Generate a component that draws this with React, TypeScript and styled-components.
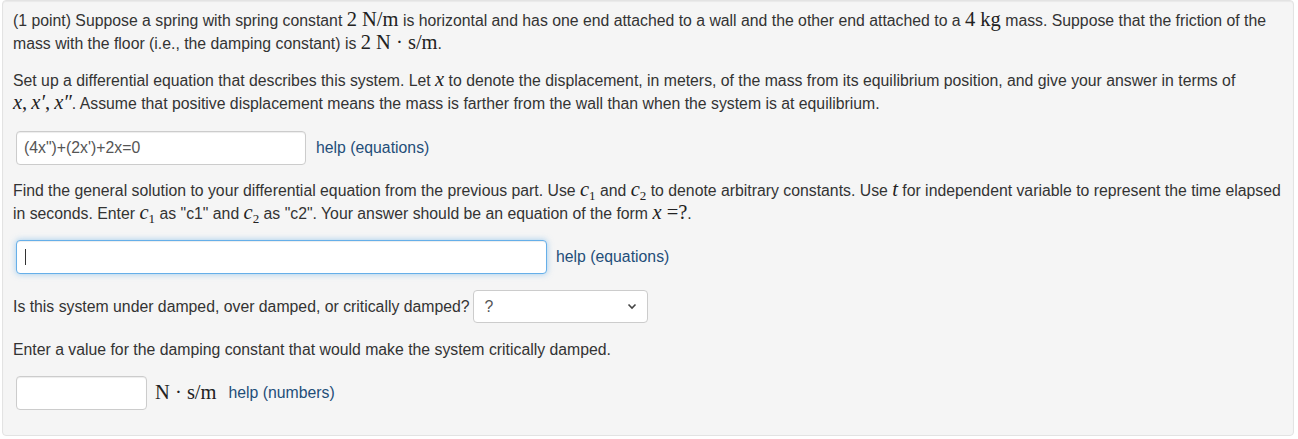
import React from "react";
import styled, { createGlobalStyle } from "styled-components";

const Global = createGlobalStyle`
  html, body { margin: 0; padding: 0; background: #ffffff; }
  body { font-family: "Liberation Sans", Arial, sans-serif; font-size: 15.8px; color: #333; }
`;

const Well = styled.div`
  margin: 0 4px 0 2px;
  min-height: 416px;
  padding: 9px 10px 9px 10px;
  background: #f5f5f5;
  border: 1px solid #e3e3e3;
  border-radius: 4px;
  box-shadow: inset 0 1px 1px rgba(0, 0, 0, 0.05);
`;

const P = styled.p<{ $mt?: number }>`
  margin: ${(p) => p.$mt ?? 0}px 0 0 0;
  line-height: 22.5px;
`;

const M = styled.span`
  font-family: "Liberation Serif", "DejaVu Serif", serif;
  font-size: 20.5px;
  line-height: 0;
  white-space: nowrap;
  color: #222;
`;

const MI = styled.i`
  font-family: "Liberation Serif", "DejaVu Serif", serif;
  font-size: 20.5px;
  font-style: italic;
  line-height: 0;
  color: #222;
`;

const Sub = styled.sub`
  font-size: 13px;
  vertical-align: -4px;
  font-style: normal;
  line-height: 0;
`;

const Row = styled.div<{ $mt: number }>`
  display: flex;
  align-items: center;
  margin-top: ${(p) => p.$mt}px;
`;

const FieldWrap = styled.div`
  position: relative;
  display: flex;
  margin-left: 3px;
`;

const Field = styled.input<{ $w: number; $focus?: boolean }>`
  box-sizing: border-box;
  width: ${(p) => p.$w}px;
  height: 34px;
  padding: 0 7px;
  font-family: "Liberation Sans", Arial, sans-serif;
  font-size: 15.8px;
  color: #555;
  background: #fff;
  border: 1px solid ${(p) => (p.$focus ? "#66afe9" : "#ccc")};
  border-radius: 4px;
  box-shadow: ${(p) =>
    p.$focus
      ? "inset 0 1px 1px rgba(0,0,0,.075), 0 0 6px rgba(102,175,233,.6)"
      : "inset 0 1px 1px rgba(0,0,0,.075)"};
  outline: none;
`;

const Caret = styled.span`
  position: absolute;
  left: 9px;
  top: 9px;
  width: 1px;
  height: 16px;
  background: #333;
`;

const Help = styled.a<{ $ml?: number }>`
  margin-left: ${(p) => p.$ml ?? 10}px;
  color: #1f4e79;
  text-decoration: none;
  cursor: pointer;
`;

const Select = styled.div`
  box-sizing: border-box;
  width: 175px;
  height: 33px;
  margin-left: 3px;
  padding: 0 10px 0 11px;
  display: flex;
  align-items: center;
  justify-content: space-between;
  background: #fff;
  border: 1px solid #ccc;
  border-radius: 4px;
  color: #555;
`;

const Unit = styled.span`
  margin-left: 8px;
  font-family: "Liberation Serif", "DejaVu Serif", serif;
  font-size: 20.5px;
  color: #222;
  white-space: pre;
`;

const Chevron = () => (
  <svg width="10" height="7" viewBox="0 0 10 7">
    <path d="M1.5 1.5 L5 5 L8.5 1.5" fill="none" stroke="#444" strokeWidth="1.6" />
  </svg>
);

export default function App() {
  return (
    <>
      <Global />
      <Well>
        <P>
          (1 point) Suppose a spring with spring constant <M>2 N/m</M> is horizontal and has one end
          attached to a wall and the other end attached to a <M>4 kg</M> mass. Suppose that the
          friction of the mass with the floor (i.e., the damping constant) is <M>2 N · s/m</M>.
        </P>
        <P $mt={15}>
          Set up a differential equation that describes this system. Let <MI>x</MI> to denote the
          displacement, in meters, of the mass from its equilibrium position, and give your answer in
          terms of{" "}
          <M>
            <i>x</i>,&thinsp;<i>x′</i>,&thinsp;<i>x″</i>
          </M>
          . Assume that positive displacement means the mass is farther from the wall than when the
          system is at equilibrium.
        </P>
        <Row $mt={16}>
          <FieldWrap>
            <Field $w={290} readOnly value={'(4x")+(2x\')+2x=0'} />
          </FieldWrap>
          <Help>help (equations)</Help>
        </Row>
        <P $mt={15}>
          Find the general solution to your differential equation from the previous part. Use{" "}
          <MI>
            c<Sub>1</Sub>
          </MI>{" "}
          and{" "}
          <MI>
            c<Sub>2</Sub>
          </MI>{" "}
          to denote arbitrary constants. Use <MI>t</MI> for independent variable to represent the time
          elapsed in seconds. Enter{" "}
          <MI>
            c<Sub>1</Sub>
          </MI>{" "}
          as "c1" and{" "}
          <MI>
            c<Sub>2</Sub>
          </MI>{" "}
          as "c2". Your answer should be an equation of the form{" "}
          <M>
            <i>x</i> =?
          </M>
          .
        </P>
        <Row $mt={15}>
          <FieldWrap>
            <Field $w={531} $focus readOnly value="" />
            <Caret />
          </FieldWrap>
          <Help $ml={9}>help (equations)</Help>
        </Row>
        <Row $mt={16}>
          <span>Is this system under damped, over damped, or critically damped?</span>
          <Select>
            <span>?</span>
            <Chevron />
          </Select>
        </Row>
        <P $mt={16}>Enter a value for the damping constant that would make the system critically damped.</P>
        <Row $mt={14}>
          <FieldWrap>
            <Field $w={131} readOnly value="" />
          </FieldWrap>
          <Unit>N · s/m</Unit>
          <Help $ml={12}>help (numbers)</Help>
        </Row>
      </Well>
    </>
  );
}
